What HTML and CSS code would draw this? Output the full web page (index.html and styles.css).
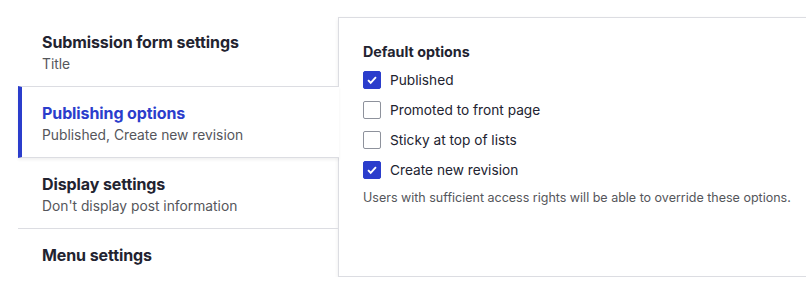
FILE: index.html
```html
<!DOCTYPE html>
<html lang="en">
<head>
  <meta charset="UTF-8">
  <meta name="viewport" content="width=device-width, initial-scale=1.0">
  <title>Vertical tabs</title>
  <link rel="stylesheet" href="styles.css">
</head>
<body>
  <div class="vtabs">
    <!-- tab menu -->
    <ul class="vtabs-menu">
      <li class="vtabs-item">
        <a href="#" class="vtabs-title">Submission form settings</a>
        <span class="vtabs-summary">Title</span>
      </li>
      <li class="vtabs-item is-selected">
        <a href="#" class="vtabs-title">Publishing options</a>
        <span class="vtabs-summary">Published, Create new revision</span>
      </li>
      <li class="vtabs-item">
        <a href="#" class="vtabs-title">Display settings</a>
        <span class="vtabs-summary">Don't display post information</span>
      </li>
      <li class="vtabs-item">
        <a href="#" class="vtabs-title">Menu settings</a>
      </li>
    </ul>

    <!-- active pane -->
    <div class="vtabs-pane">
      <div class="pane-label">Default options</div>
      <label class="check-row"><input type="checkbox" class="check" checked> Published</label>
      <label class="check-row"><input type="checkbox" class="check"> Promoted to front page</label>
      <label class="check-row"><input type="checkbox" class="check"> Sticky at top of lists</label>
      <label class="check-row"><input type="checkbox" class="check" checked> Create new revision</label>
      <div class="pane-help">Users with sufficient access rights will be able to override these options.</div>
    </div>
  </div>
</body>
</html>
```

FILE: styles.css
```css
html, body {
  margin: 0;
  padding: 0;
  background: #fff;
  overflow: hidden;
}
body {
  font-family: Inter, "Noto Sans", "Liberation Sans", sans-serif;
  color: #222330;
}

.vtabs {
  display: flex;
  align-items: flex-start;
  padding: 16px 0 0 18px;
  width: 820px;
}

.vtabs-menu {
  list-style: none;
  margin: 0;
  padding: 0;
  width: 320px;
  flex-shrink: 0;
  position: relative;
  z-index: 2;
}
.vtabs-item {
  display: flex;
  flex-direction: column;
  gap: 2px;
  padding: 16px 24px 12px;
  border-bottom: 1px solid #dcdde2;
}
.vtabs-item:last-child {
  border-bottom: 0;
}
.vtabs-item.is-selected {
  margin-top: -1px;
  padding-left: 20px;
  margin-right: -1px;
  background: #fff;
  border-top: 1px solid #dcdde2;
  border-left: 4px solid #2b3dcc;
  box-shadow: 0 2px 3px rgba(0, 0, 0, 0.06);
}
.vtabs-title {
  font-size: 16px;
  line-height: 20px;
  font-weight: 700;
  color: #222330;
  text-decoration: none;
  letter-spacing: -0.1px;
}
.is-selected .vtabs-title {
  color: #2b3dcc;
}
.vtabs-summary {
  font-size: 13.8px;
  line-height: 20px;
  color: #55565b;
}

.vtabs-pane {
  flex: 1;
  margin-top: 1px;
  height: 260px;
  box-sizing: border-box;
  padding: 25px 24px 0 24px;
  border: 1px solid #dcdde2;
  background: #fff;
  box-shadow: 0 2px 4px rgba(0, 0, 0, 0.08);
  position: relative;
  z-index: 1;
}
.pane-label {
  font-size: 14.3px;
  line-height: 18px;
  font-weight: 700;
  margin-bottom: 4px;
}
.check-row {
  display: flex;
  align-items: center;
  gap: 9px;
  height: 30px;
  font-size: 13.7px;
  color: #222330;
}
.check {
  appearance: none;
  margin: 0;
  width: 18px;
  height: 18px;
  box-sizing: border-box;
  border: 1px solid #8e929c;
  border-radius: 2px;
  background: #fff;
}
.check:checked {
  border-color: #2b3dcc;
  background: #2b3dcc url("data:image/svg+xml,%3Csvg xmlns='http://www.w3.org/2000/svg' viewBox='0 0 16 16'%3E%3Cpath d='M3.5 8.2l3 3 6-6.4' fill='none' stroke='%23fff' stroke-width='2.2'/%3E%3C/svg%3E") no-repeat center / 14px 14px;
}
.pane-help {
  margin-top: 5px;
  font-size: 12.5px;
  line-height: 16px;
  color: #55565b;
}
```
